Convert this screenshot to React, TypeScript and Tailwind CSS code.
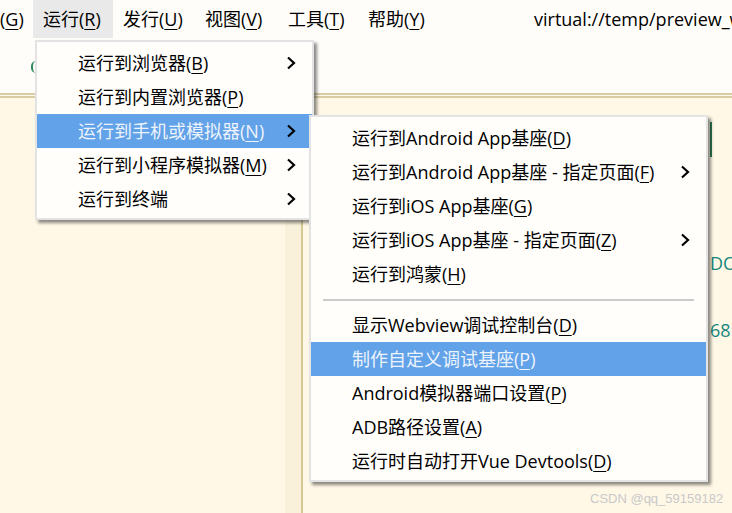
import React from "react";

type Item = { pre: string; key: string; arrow?: boolean; active?: boolean; sep?: boolean };

const topMenu = [
  { pre: "", key: "G", w: "w-[33px]", pl: "pl-0" },
  { pre: "运行", key: "R", w: "w-[80px]", pl: "pl-[10px]", open: true },
  { pre: "发行", key: "U", w: "w-[82px]", pl: "pl-[10px]" },
  { pre: "视图", key: "V", w: "w-[83px]", pl: "pl-[10px]" },
  { pre: "工具", key: "T", w: "w-[80px]", pl: "pl-[10px]" },
  { pre: "帮助", key: "Y", w: "w-[176px]", pl: "pl-[10px]" },
];

const runMenu: Item[] = [
  { pre: "运行到浏览器", key: "B", arrow: true },
  { pre: "运行到内置浏览器", key: "P" },
  { pre: "运行到手机或模拟器", key: "N", arrow: true, active: true },
  { pre: "运行到小程序模拟器", key: "M", arrow: true },
  { pre: "运行到终端", key: "", arrow: true },
];

const phoneMenu: Item[] = [
  { pre: "运行到Android App基座", key: "D" },
  { pre: "运行到Android App基座 - 指定页面", key: "F", arrow: true },
  { pre: "运行到iOS App基座", key: "G" },
  { pre: "运行到iOS App基座 - 指定页面", key: "Z", arrow: true },
  { pre: "运行到鸿蒙", key: "H" },
  { pre: "", key: "", sep: true },
  { pre: "显示Webview调试控制台", key: "D" },
  { pre: "制作自定义调试基座", key: "P", active: true },
  { pre: "Android模拟器端口设置", key: "P" },
  { pre: "ADB路径设置", key: "A" },
  { pre: "运行时自动打开Vue Devtools", key: "D" },
];

function Chevron() {
  return (
    <svg width="10" height="14" viewBox="0 0 10 14" className="shrink-0">
      <polyline points="2,1.5 8,7 2,12.5" fill="none" stroke="#000" strokeWidth="2.2" />
    </svg>
  );
}

function Label({ pre, k }: { pre: string; k: string }) {
  return (
    <span className="whitespace-nowrap">
      {pre}
      {k && (
        <>
          (<span className="underline decoration-1 underline-offset-[3px]">{k}</span>)
        </>
      )}
    </span>
  );
}

function MenuRow({ item }: { item: Item }) {
  if (item.sep) {
    return (
      <div className="h-[17px] flex items-center px-[12px]">
        <div className="h-[2px] w-full bg-[#cbcbcb]" />
      </div>
    );
  }
  return (
    <div
      className={`h-[34px] flex items-center justify-between pl-[41px] pr-[16px] ${
        item.active ? "bg-[#62a2e8] text-[#eef4fc]" : "text-black"
      }`}
    >
      <Label pre={item.pre} k={item.key} />
      {item.arrow && <Chevron />}
    </div>
  );
}

export default function App() {
  return (
    <div className="relative w-[732px] h-[513px] overflow-hidden bg-[#fff8e7] font-['Open_Sans','Noto_Sans_CJK_SC',sans-serif] text-[18px] leading-[34px]">
      {/* menubar */}
      <div className="h-[38px] flex items-stretch bg-[#fffdf9] text-black">
        {topMenu.map((m, i) => (
          <div key={i} className={`${m.w} ${m.pl} shrink-0 flex items-center ${m.open ? "bg-[#e9e9e9]" : ""}`}>
            <Label pre={m.pre} k={m.key} />
          </div>
        ))}
        <div className="shrink-0 flex items-center whitespace-nowrap">virtual://temp/preview_wgt.html</div>
      </div>

      {/* toolbar */}
      <div className="h-[55px] bg-[#fffdf9] relative">
        <div className="absolute left-[31px] top-[23px] w-[5px] h-[12px] rounded-l-full border-l-2 border-[#2f8a5a]" />
      </div>
      <div className="h-[2px] bg-[#dacda4]" />
      <div className="h-[1px] bg-[#fffaf0]" />
      <div className="h-[2px] bg-[#dacda4]" />

      {/* content */}
      <div className="flex h-[415px]">
        <div className="w-[285px] shrink-0 bg-[#fff8e7]" />
        <div className="w-[16px] shrink-0 bg-[#f9f1da]" />
        <div className="w-[2px] shrink-0 bg-[#d8c894]" />
        <div className="flex-1 pl-[407px] pt-[24px] text-[#17877b]">
          <div className="w-[2px] h-[35px] bg-[#2c7a55]" />
          <div className="mt-[94px] leading-[24px] whitespace-nowrap">DOM</div>
          <div className="mt-[43px] leading-[24px] whitespace-nowrap">68</div>
        </div>
      </div>

      <div className="absolute left-[590px] top-[491px] text-[13px] leading-[16px] text-[#c9c9c9] font-['Liberation_Sans',sans-serif] whitespace-nowrap">
        CSDN @qq_59159182
      </div>

      {/* run menu */}
      <div className="absolute left-[35px] top-[40px] w-[279px] h-[180px] bg-[#fffefb] border-2 border-[#e3e3e3] pt-[4px] shadow-[3px_3px_3px_rgba(0,0,0,0.45)]">
        {runMenu.map((it, i) => (
          <MenuRow key={i} item={it} />
        ))}
      </div>

      {/* phone submenu */}
      <div className="absolute left-[309px] top-[115px] w-[399px] h-[367px] bg-[#fffefb] border-2 border-[#e3e3e3] pt-[4px] shadow-[3px_3px_3px_rgba(0,0,0,0.45)]">
        {phoneMenu.map((it, i) => (
          <MenuRow key={i} item={it} />
        ))}
      </div>
    </div>
  );
}
